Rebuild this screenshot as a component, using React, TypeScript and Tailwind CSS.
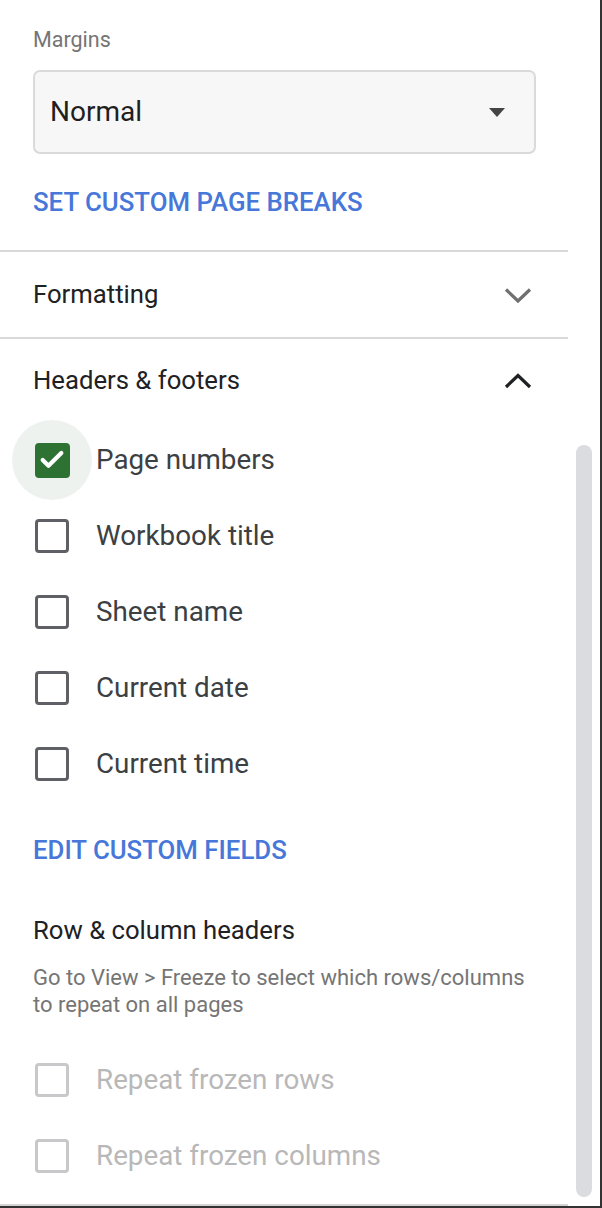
import { Check } from 'lucide-react';

const headerOptions = [
  { label: 'Page numbers', checked: true },
  { label: 'Workbook title', checked: false },
  { label: 'Sheet name', checked: false },
  { label: 'Current date', checked: false },
  { label: 'Current time', checked: false },
];

const frozenOptions = ['Repeat frozen rows', 'Repeat frozen columns'];

function Checkbox({ checked, disabled }: { checked?: boolean; disabled?: boolean }) {
  if (checked) {
    return (
      <div className="relative flex items-center justify-center w-[36px] h-[36px]">
        <div className="absolute -inset-[22px] rounded-full bg-[#eef2ef]" />
        <div className="relative flex items-center justify-center w-[35px] h-[35px] rounded-[4px] bg-[#2d7233]">
          <Check className="w-[28px] h-[28px] text-white" strokeWidth={3.6} />
        </div>
      </div>
    );
  }
  return (
    <div className="flex items-center justify-center w-[36px] h-[36px]">
      <div
        className={
          disabled
            ? 'w-[34px] h-[34px] rounded-[4px] border-[3px] border-[#c8c8ca]'
            : 'w-[34px] h-[34px] rounded-[4px] border-[3px] border-[#5f6065]'
        }
      />
    </div>
  );
}

function Chevron({ up }: { up?: boolean }) {
  return (
    <svg width="28" height="18" viewBox="0 0 28 18" className="mr-[36px]">
      <path
        d={up ? 'M2 15 L14 3.5 L26 15' : 'M2 3.5 L14 15 L26 3.5'}
        fill="none"
        stroke={up ? '#202124' : '#707070'}
        strokeWidth="3.2"
      />
    </svg>
  );
}

export default function App() {
  return (
    <div className="relative flex w-[602px] h-[1208px] bg-white border-r-2 border-b-2 border-[#333333] overflow-hidden font-['Roboto',sans-serif]">
      <div className="flex flex-col w-[568px] h-full border-b-2 border-[#d4d4d4]">
        {/* Margins */}
        <div className="flex flex-col h-[250px] pl-[33px]">
          <div className="mt-[28px] text-[21.5px] leading-[24px] text-[#757575]">Margins</div>
          <div className="mt-[18px] flex items-center justify-between w-[503px] h-[84px] pl-[15px] pr-[29px] rounded-[7px] border-2 border-[#dadada] bg-[#f7f7f7]">
            <span className="text-[28px] text-[#1f1f1f]">Normal</span>
            <svg width="16" height="9" viewBox="0 0 16 9">
              <path d="M0 0 L16 0 L8 9 Z" fill="#444444" />
            </svg>
          </div>
          <div className="mt-[34px] text-[25.8px] leading-[28px] font-medium text-[#4677d9]">
            SET CUSTOM PAGE BREAKS
          </div>
        </div>

        <div className="h-[2px] bg-[#d9d9d9]" />

        {/* Formatting */}
        <div className="flex items-center justify-between h-[85px] pl-[33px]">
          <span className="text-[25.7px] text-[#202124]">Formatting</span>
          <Chevron />
        </div>

        <div className="h-[2px] bg-[#d9d9d9]" />

        {/* Headers & footers */}
        <div className="flex items-center justify-between h-[83px] pl-[33px]">
          <span className="text-[25.7px] text-[#202124]">Headers &amp; footers</span>
          <Chevron up />
        </div>

        <div className="flex flex-col">
          {headerOptions.map((opt) => (
            <div key={opt.label} className="flex items-center h-[76px] pl-[34px]">
              <Checkbox checked={opt.checked} />
              <span className="ml-[26px] text-[27.8px] text-[#3c4043]">{opt.label}</span>
            </div>
          ))}
        </div>

        <div className="mt-[34px] pl-[33px] text-[25.8px] leading-[28px] font-medium text-[#4677d9]">
          EDIT CUSTOM FIELDS
        </div>

        <div className="mt-[52px] pl-[33px] text-[25.7px] leading-[28px] text-[#202124]">
          Row &amp; column headers
        </div>
        <div className="mt-[20px] pl-[33px] pr-[35px] text-[22px] leading-[27px] text-[#757575]">
          Go to View &gt; Freeze to select which rows/columns to repeat on all pages
        </div>

        <div className="mt-[24px] flex flex-col">
          {frozenOptions.map((label) => (
            <div key={label} className="flex items-center h-[76px] pl-[34px]">
              <Checkbox disabled />
              <span className="ml-[26px] text-[27.8px] text-[#b8b8b8]">{label}</span>
            </div>
          ))}
        </div>
      </div>

      {/* scrollbar */}
      <div className="absolute left-[576px] top-[445px] w-[16px] h-[752px] rounded-full bg-[#dadce0]" />
    </div>
  );
}
